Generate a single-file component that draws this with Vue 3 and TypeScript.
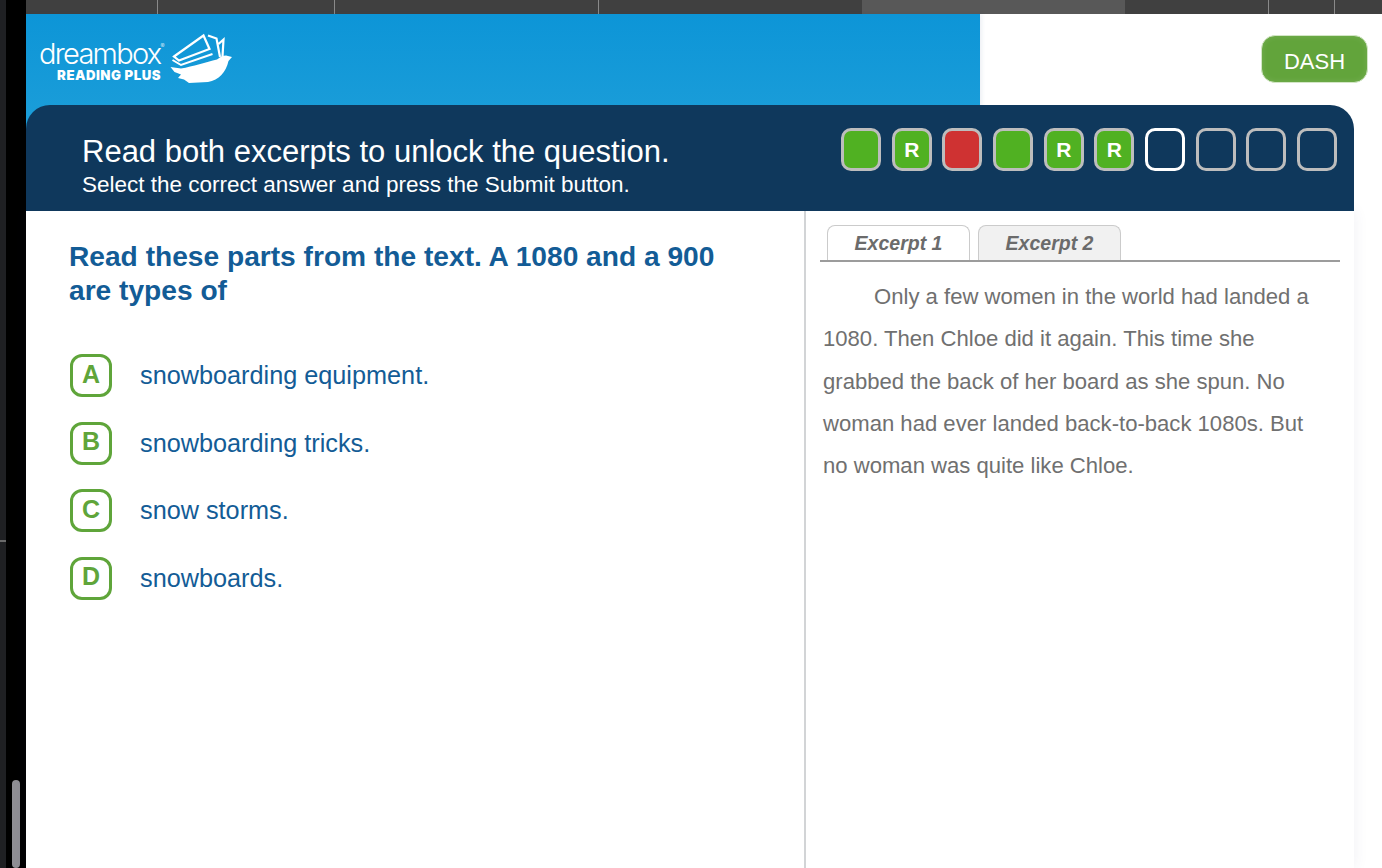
<script setup lang="ts">
type Mark = { state: 'right' | 'wrong' | 'current' | 'empty'; retry?: boolean }

const topTabs = [
  { width: 132 },
  { width: 177 },
  { width: 264 },
  { width: 264, plain: true },
  { width: 263, active: true },
  { width: 144 },
  { width: 66 },
  { width: 47, plain: true }
]

const marks: Mark[] = [
  { state: 'right' },
  { state: 'right', retry: true },
  { state: 'wrong' },
  { state: 'right' },
  { state: 'right', retry: true },
  { state: 'right', retry: true },
  { state: 'current' },
  { state: 'empty' },
  { state: 'empty' },
  { state: 'empty' }
]

const answers = [
  { letter: 'A', text: 'snowboarding equipment.' },
  { letter: 'B', text: 'snowboarding tricks.' },
  { letter: 'C', text: 'snow storms.' },
  { letter: 'D', text: 'snowboards.' }
]

const lines = [
  'Only a few women in the world had landed a',
  '1080. Then Chloe did it again. This time she',
  'grabbed the back of her board as she spun. No',
  'woman had ever landed back-to-back 1080s. But',
  'no woman was quite like Chloe.'
]
</script>

<template>
  <div class="screen">
    <aside class="gutter">
      <div class="gutter-rail"><span class="rail-tick" /></div>
      <div class="gutter-track"><span class="scroll-thumb" /></div>
    </aside>

    <div class="page">
      <nav class="top-strip">
        <span
          v-for="(tab, i) in topTabs"
          :key="i"
          class="strip-tab"
          :class="{ active: tab.active, plain: tab.plain }"
          :style="{ width: tab.width + 'px' }"
        />
      </nav>

      <header class="header">
        <div class="brand">
          <div class="wordmark">
            <div class="dreambox">dreambox<sup class="reg">®</sup></div>
            <div class="reading-plus">READING PLUS</div>
          </div>
          <svg class="bird" viewBox="170 33 62 51" width="62" height="51" aria-hidden="true">
            <path d="M174 56.500 203.500 35.500 209.500 49 179 60.500Z" fill="none" stroke="#fff" stroke-width="2.200" />
            <path d="M172.500 60 181 65 212.500 54" fill="none" stroke="#fff" stroke-width="2" />
            <path d="M208 35.500 216.500 38.500 220 57M218.500 44 223.500 39.500 222.500 56.500" fill="none" stroke="#fff" stroke-width="2.200" />
            <path
              d="M170.500 67 181 68.500C193 66.500 206 62 217 59.500L222 56 226 55.500 232 57 228.500 61C226 72 219 80 208 82L189 83 184 79.500 178 78 181 74.500 174.500 72Z"
              fill="#fff"
            />
          </svg>
        </div>
        <div class="dash-area">
          <button class="dash" type="button">DASH</button>
        </div>
      </header>

      <section class="panel">
        <div class="panel-text">
          <h1>Read both excerpts to unlock the question.</h1>
          <p>Select the correct answer and press the Submit button.</p>
        </div>
        <div class="marks">
          <span v-for="(mark, i) in marks" :key="i" class="mark" :class="mark.state">
            {{ mark.retry ? 'R' : '' }}
          </span>
        </div>
      </section>

      <main class="content">
        <section class="question">
          <h2>Read these parts from the text. A 1080 and a 900 are types of</h2>
          <ul class="answers">
            <li v-for="answer in answers" :key="answer.letter" class="answer">
              <span class="letter">{{ answer.letter }}</span>
              <span class="answer-text">{{ answer.text }}</span>
            </li>
          </ul>
        </section>

        <section class="reading">
          <div class="tabs">
            <span class="tab selected">Excerpt 1</span>
            <span class="tab">Excerpt 2</span>
          </div>
          <div class="excerpt">
            <div v-for="(line, i) in lines" :key="i" class="line" :class="{ first: i === 0 }">
              {{ line }}
            </div>
          </div>
        </section>
      </main>
    </div>
  </div>
</template>

<style scoped>
.screen {
  display: flex;
  width: 1382px;
  height: 868px;
  overflow: hidden;
  background: #fff;
  font-family: 'Liberation Sans', Arial, sans-serif;
}

.gutter {
  display: flex;
  flex: 0 0 26px;
  height: 868px;
}

.gutter-rail {
  width: 6px;
  background: #1f2023;
  padding-top: 540px;
  box-sizing: border-box;
}

.rail-tick {
  display: block;
  height: 2px;
  background: #6a6a6a;
}

.gutter-track {
  display: flex;
  flex: 1;
  align-items: flex-end;
  justify-content: center;
  background: #000;
}

.scroll-thumb {
  width: 8px;
  height: 88px;
  border-radius: 4px;
  background: #8f8e94;
}

.page {
  flex: 1;
  min-width: 0;
}

.top-strip {
  display: flex;
  height: 14px;
  background: #404040;
}

.strip-tab {
  box-sizing: border-box;
  border-right: 1px solid #8a8a8a;
}

.strip-tab.plain {
  border-right: 0;
}

.strip-tab.active {
  border-right: 0;
  background: #585858;
}

.header {
  display: flex;
  height: 115px;
}

.brand {
  display: flex;
  align-items: flex-start;
  box-sizing: border-box;
  width: 954px;
  padding: 19px 0 0 13px;
  background: linear-gradient(#0d95d7, #1c9ed9);
  box-shadow: 2px 0 4px rgba(30, 60, 110, 0.08);
}

.wordmark {
  width: 125px;
  color: #fff;
  text-align: right;
}

.dreambox {
  margin-top: 8px;
  font-family: Inter, sans-serif;
  font-size: 29px;
  font-weight: 300;
  line-height: 26px;
  letter-spacing: -1.700px;
  white-space: nowrap;
}

.reg {
  font-size: 6px;
  line-height: 0;
  vertical-align: 16px;
  letter-spacing: 0;
}

.reading-plus {
  margin-right: 3px;
  font-family: Inter, sans-serif;
  font-size: 13.200px;
  font-weight: 900;
  line-height: 16px;
  letter-spacing: 0.500px;
  white-space: nowrap;
}

.bird {
  display: block;
  margin-left: 6px;
}

.dash-area {
  flex: 1;
  padding: 21px 0 0 281px;
}

.dash {
  display: block;
  width: 107px;
  height: 48px;
  padding: 5px 0 0;
  border: 1px solid #d3e6c6;
  border-radius: 14px;
  background: #62a43b;
  box-shadow: inset 0 0 6px rgba(255, 255, 255, 0.12);
  color: #fff;
  font-family: inherit;
  font-size: 22px;
}

.panel {
  position: relative;
  display: flex;
  align-items: flex-start;
  justify-content: space-between;
  box-sizing: border-box;
  width: 1328px;
  height: 106px;
  margin-top: -24px;
  padding: 25px 17px 0 56px;
  border-radius: 24px 24px 0 0;
  background: #0f385c;
  color: #fff;
}

.panel h1 {
  margin: 0;
  font-size: 31px;
  font-weight: 400;
  line-height: 43px;
  white-space: nowrap;
}

.panel p {
  margin: 0;
  font-size: 22.500px;
  line-height: 23px;
  white-space: nowrap;
}

.marks {
  display: flex;
  gap: 10.670px;
  margin-top: -2px;
}

.mark {
  display: flex;
  align-items: center;
  justify-content: center;
  box-sizing: border-box;
  width: 40px;
  height: 43px;
  padding-top: 1px;
  border: 3px solid #bdbdbd;
  border-radius: 10px;
  color: #fff;
  font-size: 21px;
  font-weight: 700;
}

.mark.right {
  background: #50b122;
}

.mark.wrong {
  background: #cf3232;
}

.mark.current {
  border-color: #fff;
}

.content {
  display: flex;
  width: 1328px;
  height: 657px;
  box-shadow: 0 0 14px rgba(60, 70, 110, 0.08);
}

.question {
  box-sizing: border-box;
  flex: 0 0 780px;
  padding: 29px 0 0 43px;
  border-right: 2px solid #d2d4d6;
}

.question h2 {
  width: 680px;
  margin: 0;
  color: #135c96;
  font-size: 28.150px;
  font-weight: 700;
  line-height: 34px;
}

.answers {
  margin: 46px 0 0;
  padding: 0;
  list-style: none;
}

.answer {
  display: flex;
  align-items: center;
  height: 43px;
  margin: 0 0 24.500px 1px;
}

.letter {
  display: flex;
  align-items: center;
  justify-content: center;
  box-sizing: border-box;
  width: 42px;
  height: 43px;
  padding-bottom: 3px;
  border: 3px solid #5fa53a;
  border-radius: 12px;
  color: #5fa53a;
  font-size: 25px;
  font-weight: 700;
}

.answer-text {
  margin-left: 28px;
  color: #135c96;
  font-size: 25.250px;
}

.reading {
  flex: 1;
  padding: 14px 14px 0 14px;
}

.tabs {
  display: flex;
  gap: 8px;
  padding-left: 7px;
  border-bottom: 2px solid #9c9c9c;
}

.tab {
  box-sizing: border-box;
  width: 143px;
  height: 35px;
  border: 1px solid #cbcbcb;
  border-bottom: 0;
  border-radius: 8px 8px 0 0;
  background: #f1f1f1;
  color: #6b6b6b;
  font-size: 19.500px;
  font-style: italic;
  font-weight: 700;
  line-height: 35px;
  text-align: center;
}

.tab.selected {
  background: #fff;
}

.excerpt {
  margin-top: 14px;
  padding-left: 3px;
  color: #707070;
  font-size: 22.100px;
  line-height: 42.300px;
  white-space: nowrap;
}

.line.first {
  text-indent: 51px;
}
</style>

<style>
html,
body {
  margin: 0;
  overflow: hidden;
  background: #fff;
}
</style>
